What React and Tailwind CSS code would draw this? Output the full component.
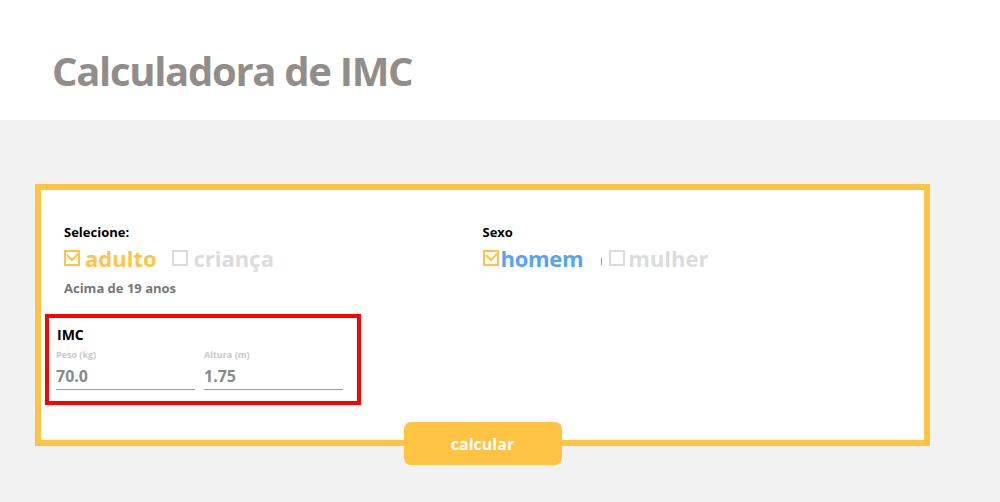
import React from "react";

function CheckBox({ checked }) {
  return (
    <svg width="16" height="16" viewBox="0 0 16 16" className="shrink-0">
      <rect
        x="1"
        y="1"
        width="14"
        height="14"
        fill="none"
        stroke={checked ? "#ffc444" : "#dcdcdc"}
        strokeWidth="2"
      />
      {checked && (
        <polyline
          points="3,5 8,10 15,3"
          fill="none"
          stroke="#ffc444"
          strokeWidth="2"
        />
      )}
    </svg>
  );
}

function Field({ label, value }) {
  return (
    <div className="w-[139px]">
      <div className="text-[9px] font-bold text-[#c8c8c8] leading-[12px]">{label}</div>
      <div className="mt-[5px] text-[16px] font-bold text-[#8a8a8a] leading-[20px] pb-[3px] border-b border-[#9a9a9a]">
        {value}
      </div>
    </div>
  );
}

export default function App() {
  return (
    <div
      className="w-[1000px] h-[502px] bg-[#f2f2f2] overflow-hidden"
      style={{ fontFamily: '"Open Sans", "Noto Sans", sans-serif' }}
    >
      {/* Header */}
      <div className="h-[120px] bg-white pl-[52px] pt-[46px]">
        <h1 className="text-[40px] font-bold text-[#928d88] leading-[50px] tracking-[-1.3px]">
          Calculadora de IMC
        </h1>
      </div>

      {/* Calculator card */}
      <div className="pt-[64px] pl-[35px]">
        <div className="w-[895px] h-[262px] border-[6px] border-[#ffc444] bg-white pt-[33px]">
          <div className="grid grid-cols-2 px-[23px]">
            {/* Age group */}
            <div>
              <div className="text-[13px] font-bold text-black leading-[18px]">Selecione:</div>
              <div className="flex items-center mt-[4px] h-[26px]">
                <CheckBox checked />
                <span className="ml-[5px] text-[22px] font-bold text-[#ffc444] leading-[26px]">adulto</span>
                <span className="ml-[15px]">
                  <CheckBox />
                </span>
                <span className="ml-[6px] text-[22px] font-bold text-[#dcdcdc] leading-[26px]">criança</span>
              </div>
              <div className="mt-[8px] text-[13px] font-bold text-[#777] leading-[18px]">Acima de 19 anos</div>
            </div>

            {/* Sex */}
            <div>
              <div className="text-[13px] font-bold text-black leading-[18px]">Sexo</div>
              <div className="flex items-center mt-[4px] h-[26px]">
                <CheckBox checked />
                <span className="ml-[2px] text-[22px] font-bold text-[#55a5f5] leading-[26px] tracking-[-0.3px]">homem</span>
                <span className="ml-[18px] w-px h-[7px] mt-[6px] bg-[#999]"></span>
                <span className="ml-[7px]">
                  <CheckBox />
                </span>
                <span className="ml-[3px] text-[22px] font-bold text-[#dcdcdc] leading-[26px]">mulher</span>
              </div>
            </div>
          </div>

          {/* IMC inputs */}
          <div className="mt-[17px] ml-[4px] w-[316px] h-[91px] border-[4px] border-[#ff0000] pl-[7px] pt-[8px]">
            <div className="pl-[1px] text-[14px] font-bold text-black leading-[18px]">IMC</div>
            <div className="flex gap-[9px] mt-[5px]">
              <Field label="Peso (kg)" value="70.0" />
              <Field label="Altura (m)" value="1.75" />
            </div>
          </div>
        </div>

        <div className="w-[895px] flex justify-center -mt-[24px]">
          <button className="w-[158px] h-[43px] rounded-[7px] bg-[#ffc444] text-white text-[16px] font-bold">
            calcular
          </button>
        </div>
      </div>
    </div>
  );
}
